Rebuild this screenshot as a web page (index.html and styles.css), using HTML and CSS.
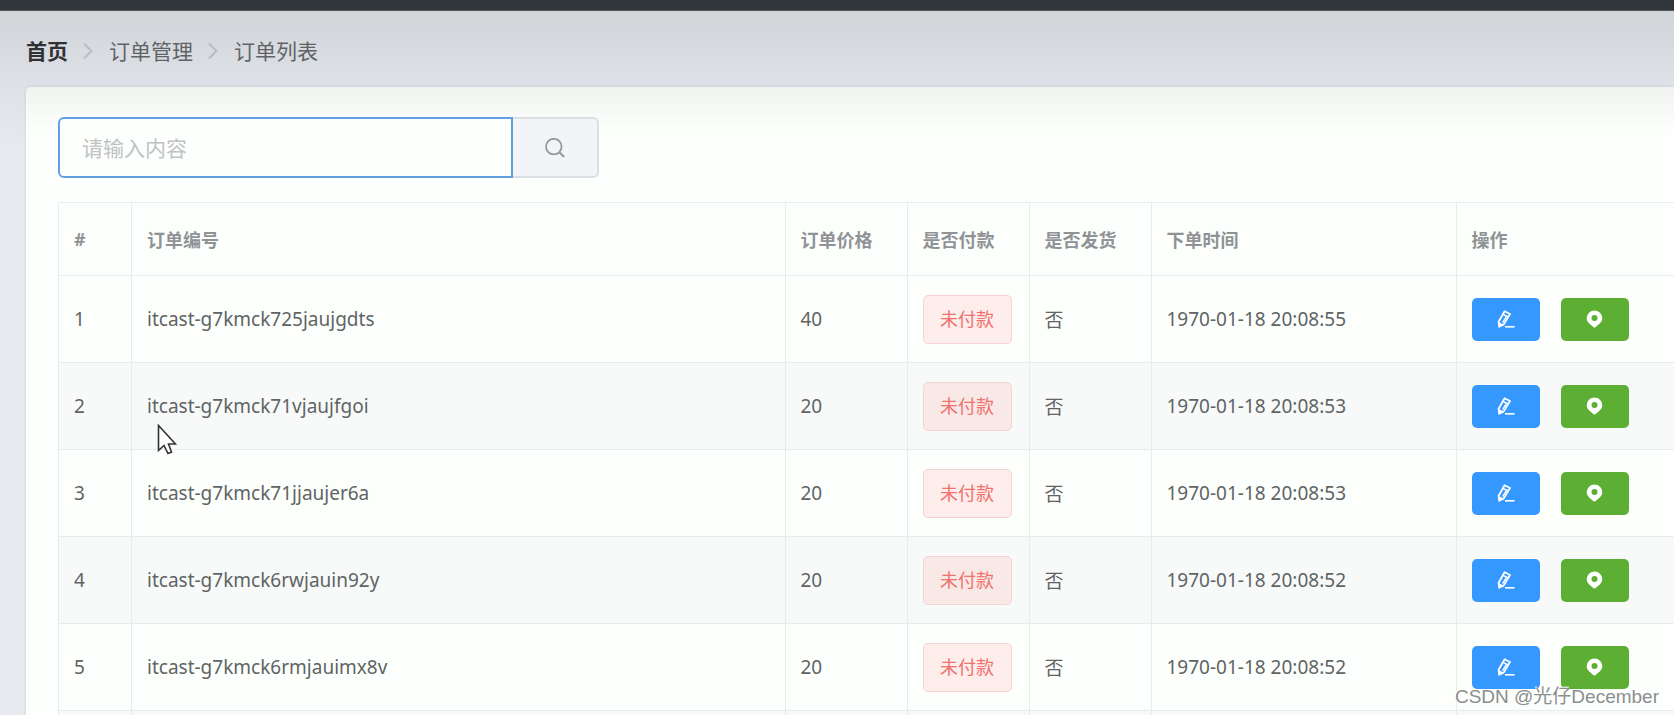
FILE: index.html
```html
<!DOCTYPE html>
<html lang="zh-CN">
<head>
    <meta charset="UTF-8">
    <meta name="viewport" content="width=device-width, initial-scale=1.0">
    <title>订单列表</title>
    <link rel="stylesheet" href="styles.css">
</head>
<body>

    <!-- Shared icons -->
    <svg class="sprite" aria-hidden="true">
        <symbol id="icon-arrow" viewBox="0 0 10 18">
            <path d="M1 1.5 8.5 9 1 16.5" fill="none" stroke="currentColor" stroke-width="2"/>
        </symbol>
        <symbol id="icon-search" viewBox="0 0 20 20">
            <circle cx="8.8" cy="8.6" r="7.8" fill="none" stroke="currentColor" stroke-width="1.8"/>
            <path d="M14.3 14.2 19.2 19" fill="none" stroke="currentColor" stroke-width="2"/>
        </symbol>
        <symbol id="icon-edit" viewBox="0 0 18 18">
            <path d="M7.6 1.3 13 4 6.8 14.4 2.2 16.8 1.6 11.8Z" fill="none" stroke="currentColor" stroke-width="1.8" stroke-linejoin="round"/>
            <path d="M6 4.4 11.2 7M9.2 7 5.6 12.6" fill="none" stroke="currentColor" stroke-width="1.4"/>
            <path d="M1.6 12 6.4 14.600 2.200 16.800Z" fill="currentColor"/>
            <path d="M8 16.8H17.5" stroke="currentColor" stroke-width="1.6"/>
        </symbol>
        <symbol id="icon-location" viewBox="0 0 18 18">
            <path fill="currentColor" fill-rule="evenodd" d="M8.500.5a7.800 7.800 0 0 1 7.800 7.800c0 3.200-2.600 5.700-7.800 9.500C3.300 14 .7 11.500.7 8.300A7.800 7.800 0 0 1 8.500.5Zm0 4.600a3 3 0 1 0 0 6 3 3 0 0 0 0-6Z"/>
        </symbol>
    </svg>

    <header class="topbar"></header>

    <main class="main">
        <nav class="breadcrumb">
            <a class="breadcrumb-home" href="#">首页</a>
            <svg class="breadcrumb-arrow"><use href="#icon-arrow"/></svg>
            <span>订单管理</span>
            <svg class="breadcrumb-arrow"><use href="#icon-arrow"/></svg>
            <span>订单列表</span>
        </nav>

        <section class="card">
            <form class="search">
                <input class="search-input" type="text" placeholder="请输入内容" aria-label="请输入内容">
                <button class="search-button" type="button" aria-label="搜索">
                    <svg class="search-icon"><use href="#icon-search"/></svg>
                </button>
            </form>

            <table class="table">
                <colgroup>
                    <col class="col-index">
                    <col>
                    <col class="col-small">
                    <col class="col-small">
                    <col class="col-small">
                    <col class="col-time">
                    <col class="col-actions">
                </colgroup>
                <thead>
                    <tr>
                        <th>#</th>
                        <th>订单编号</th>
                        <th>订单价格</th>
                        <th>是否付款</th>
                        <th>是否发货</th>
                        <th>下单时间</th>
                        <th>操作</th>
                    </tr>
                </thead>
                <tbody>
                    <tr>
                        <td>1</td>
                        <td>itcast-g7kmck725jaujgdts</td>
                        <td>40</td>
                        <td><span class="tag">未付款</span></td>
                        <td>否</td>
                        <td>1970-01-18 20:08:55</td>
                        <td>
                            <div class="actions">
                                <button class="button edit" type="button" aria-label="编辑"><svg class="icon"><use href="#icon-edit"/></svg></button>
                                <button class="button location" type="button" aria-label="物流"><svg class="icon"><use href="#icon-location"/></svg></button>
                            </div>
                        </td>
                    </tr>
                    <tr>
                        <td>2</td>
                        <td>itcast-g7kmck71vjaujfgoi</td>
                        <td>20</td>
                        <td><span class="tag">未付款</span></td>
                        <td>否</td>
                        <td>1970-01-18 20:08:53</td>
                        <td>
                            <div class="actions">
                                <button class="button edit" type="button" aria-label="编辑"><svg class="icon"><use href="#icon-edit"/></svg></button>
                                <button class="button location" type="button" aria-label="物流"><svg class="icon"><use href="#icon-location"/></svg></button>
                            </div>
                        </td>
                    </tr>
                    <tr>
                        <td>3</td>
                        <td>itcast-g7kmck71jjaujer6a</td>
                        <td>20</td>
                        <td><span class="tag">未付款</span></td>
                        <td>否</td>
                        <td>1970-01-18 20:08:53</td>
                        <td>
                            <div class="actions">
                                <button class="button edit" type="button" aria-label="编辑"><svg class="icon"><use href="#icon-edit"/></svg></button>
                                <button class="button location" type="button" aria-label="物流"><svg class="icon"><use href="#icon-location"/></svg></button>
                            </div>
                        </td>
                    </tr>
                    <tr>
                        <td>4</td>
                        <td>itcast-g7kmck6rwjauin92y</td>
                        <td>20</td>
                        <td><span class="tag">未付款</span></td>
                        <td>否</td>
                        <td>1970-01-18 20:08:52</td>
                        <td>
                            <div class="actions">
                                <button class="button edit" type="button" aria-label="编辑"><svg class="icon"><use href="#icon-edit"/></svg></button>
                                <button class="button location" type="button" aria-label="物流"><svg class="icon"><use href="#icon-location"/></svg></button>
                            </div>
                        </td>
                    </tr>
                    <tr>
                        <td>5</td>
                        <td>itcast-g7kmck6rmjauimx8v</td>
                        <td>20</td>
                        <td><span class="tag">未付款</span></td>
                        <td>否</td>
                        <td>1970-01-18 20:08:52</td>
                        <td>
                            <div class="actions">
                                <button class="button edit" type="button" aria-label="编辑"><svg class="icon"><use href="#icon-edit"/></svg></button>
                                <button class="button location" type="button" aria-label="物流"><svg class="icon"><use href="#icon-location"/></svg></button>
                            </div>
                        </td>
                    </tr>
                    <tr>
                        <td></td>
                        <td></td>
                        <td></td>
                        <td></td>
                        <td></td>
                        <td></td>
                        <td></td>
                    </tr>
                </tbody>
            </table>
        </section>
    </main>

    <svg class="cursor" viewBox="0 0 20 31" aria-hidden="true">
        <path d="M1.5 1.5V26.5L7 21.5 11 29.5 14.5 28 11.5 20H18.5Z" fill="#fff" stroke="#333" stroke-width="1.6"/>
    </svg>

    <div class="watermark">CSDN @光仔December</div>

</body>
</html>
```

FILE: styles.css
```css
* {
    box-sizing: border-box;
}

body {
    font-family: "Noto Sans", "Noto Sans CJK SC", sans-serif;
    font-size: 19px;
    color: #606464;
    background-color: #e7eaf0;
    height: 100vh;
    margin: 0;
    overflow: hidden;
    position: relative;
}

.sprite {
    display: none;
}

.topbar {
    height: 11px;
    background-color: #31363a;
    border-bottom: 1px solid #54585b;
}

.main {
    padding: 26px 0 0 26px;
    background: linear-gradient(#d1d5d8, #dee1e7 76px, #e7eaf0 140px);
}

.breadcrumb {
    display: flex;
    align-items: center;
    height: 28px;
    margin-bottom: 22px;
    font-size: 21px;
    line-height: 28px;
    color: #606266;
}

.breadcrumb-home {
    color: #303133;
    font-weight: bold;
    text-decoration: none;
}

.breadcrumb-arrow {
    width: 10px;
    height: 18px;
    margin: 0 16px 0 15px;
    color: #b9bdc3;
}

.card {
    padding: 30px 0 0 32px;
    background: linear-gradient(#f1f3f1, #fdfffd 46px);
    border-top-left-radius: 5px;
    box-shadow: 0 0 4px rgba(0, 0, 0, 0.08);
}

.search {
    display: flex;
    width: 541px;
    height: 61px;
    margin-bottom: 24px;
}

.search-input {
    flex: 1;
    min-width: 0;
    padding: 0 22px;
    font: inherit;
    font-size: 21px;
    background-color: #fdfffd;
    border: 2px solid #62a0e0;
    border-radius: 6px 0 0 6px;
    outline: none;
}

.search-input::placeholder {
    color: #c0c2c5;
    opacity: 1;
}

.search-button {
    display: flex;
    align-items: center;
    justify-content: center;
    width: 86px;
    padding: 0;
    color: #96999c;
    background-color: #f2f5f7;
    border: 2px solid #dcdfe2;
    border-left: none;
    border-radius: 0 6px 6px 0;
    cursor: pointer;
}

.search-icon {
    width: 20px;
    height: 20px;
}

.table {
    width: 100%;
    table-layout: fixed;
    border-collapse: collapse;
}

.col-index {
    width: 73px;
}

.col-small {
    width: 122px;
}

.col-time {
    width: 305px;
}

.col-actions {
    width: 218px;
}

.table th,
.table td {
    height: 87px;
    padding: 0 15px;
    text-align: left;
    border: 1px solid #e9ecee;
    border-right: none;
}

.table th {
    height: 73px;
    font-size: 18px;
    color: #909396;
}

.table tbody tr:nth-child(even) {
    background-color: #f8faf9;
}

.tag {
    display: block;
    width: 89px;
    height: 49px;
    font-size: 18px;
    line-height: 47px;
    text-align: center;
    color: #f0716f;
    background-color: rgba(255, 90, 80, 0.1);
    border: 1px solid #f4d3d2;
    border-radius: 5px;
}

.actions {
    display: flex;
    gap: 21px;
}

.button {
    display: flex;
    align-items: center;
    justify-content: center;
    width: 68px;
    height: 43px;
    padding: 0;
    color: #fff;
    border: none;
    border-radius: 5px;
    cursor: pointer;
}

.button.edit {
    background-color: #3598fe;
}

.button.location {
    background-color: #5daf34;
}

.icon {
    width: 18px;
    height: 18px;
}

/* Mouse pointer over the table */
.cursor {
    position: absolute;
    left: 157px;
    top: 424px;
    width: 20px;
    height: 31px;
}

.watermark {
    position: absolute;
    right: 15px;
    bottom: 4px;
    font-family: "Liberation Sans", "Noto Sans CJK SC", sans-serif;
    font-size: 19px;
    line-height: 28px;
    color: #8b8e8d;
    text-shadow: -1px -1px 0 #fff;
}
```
